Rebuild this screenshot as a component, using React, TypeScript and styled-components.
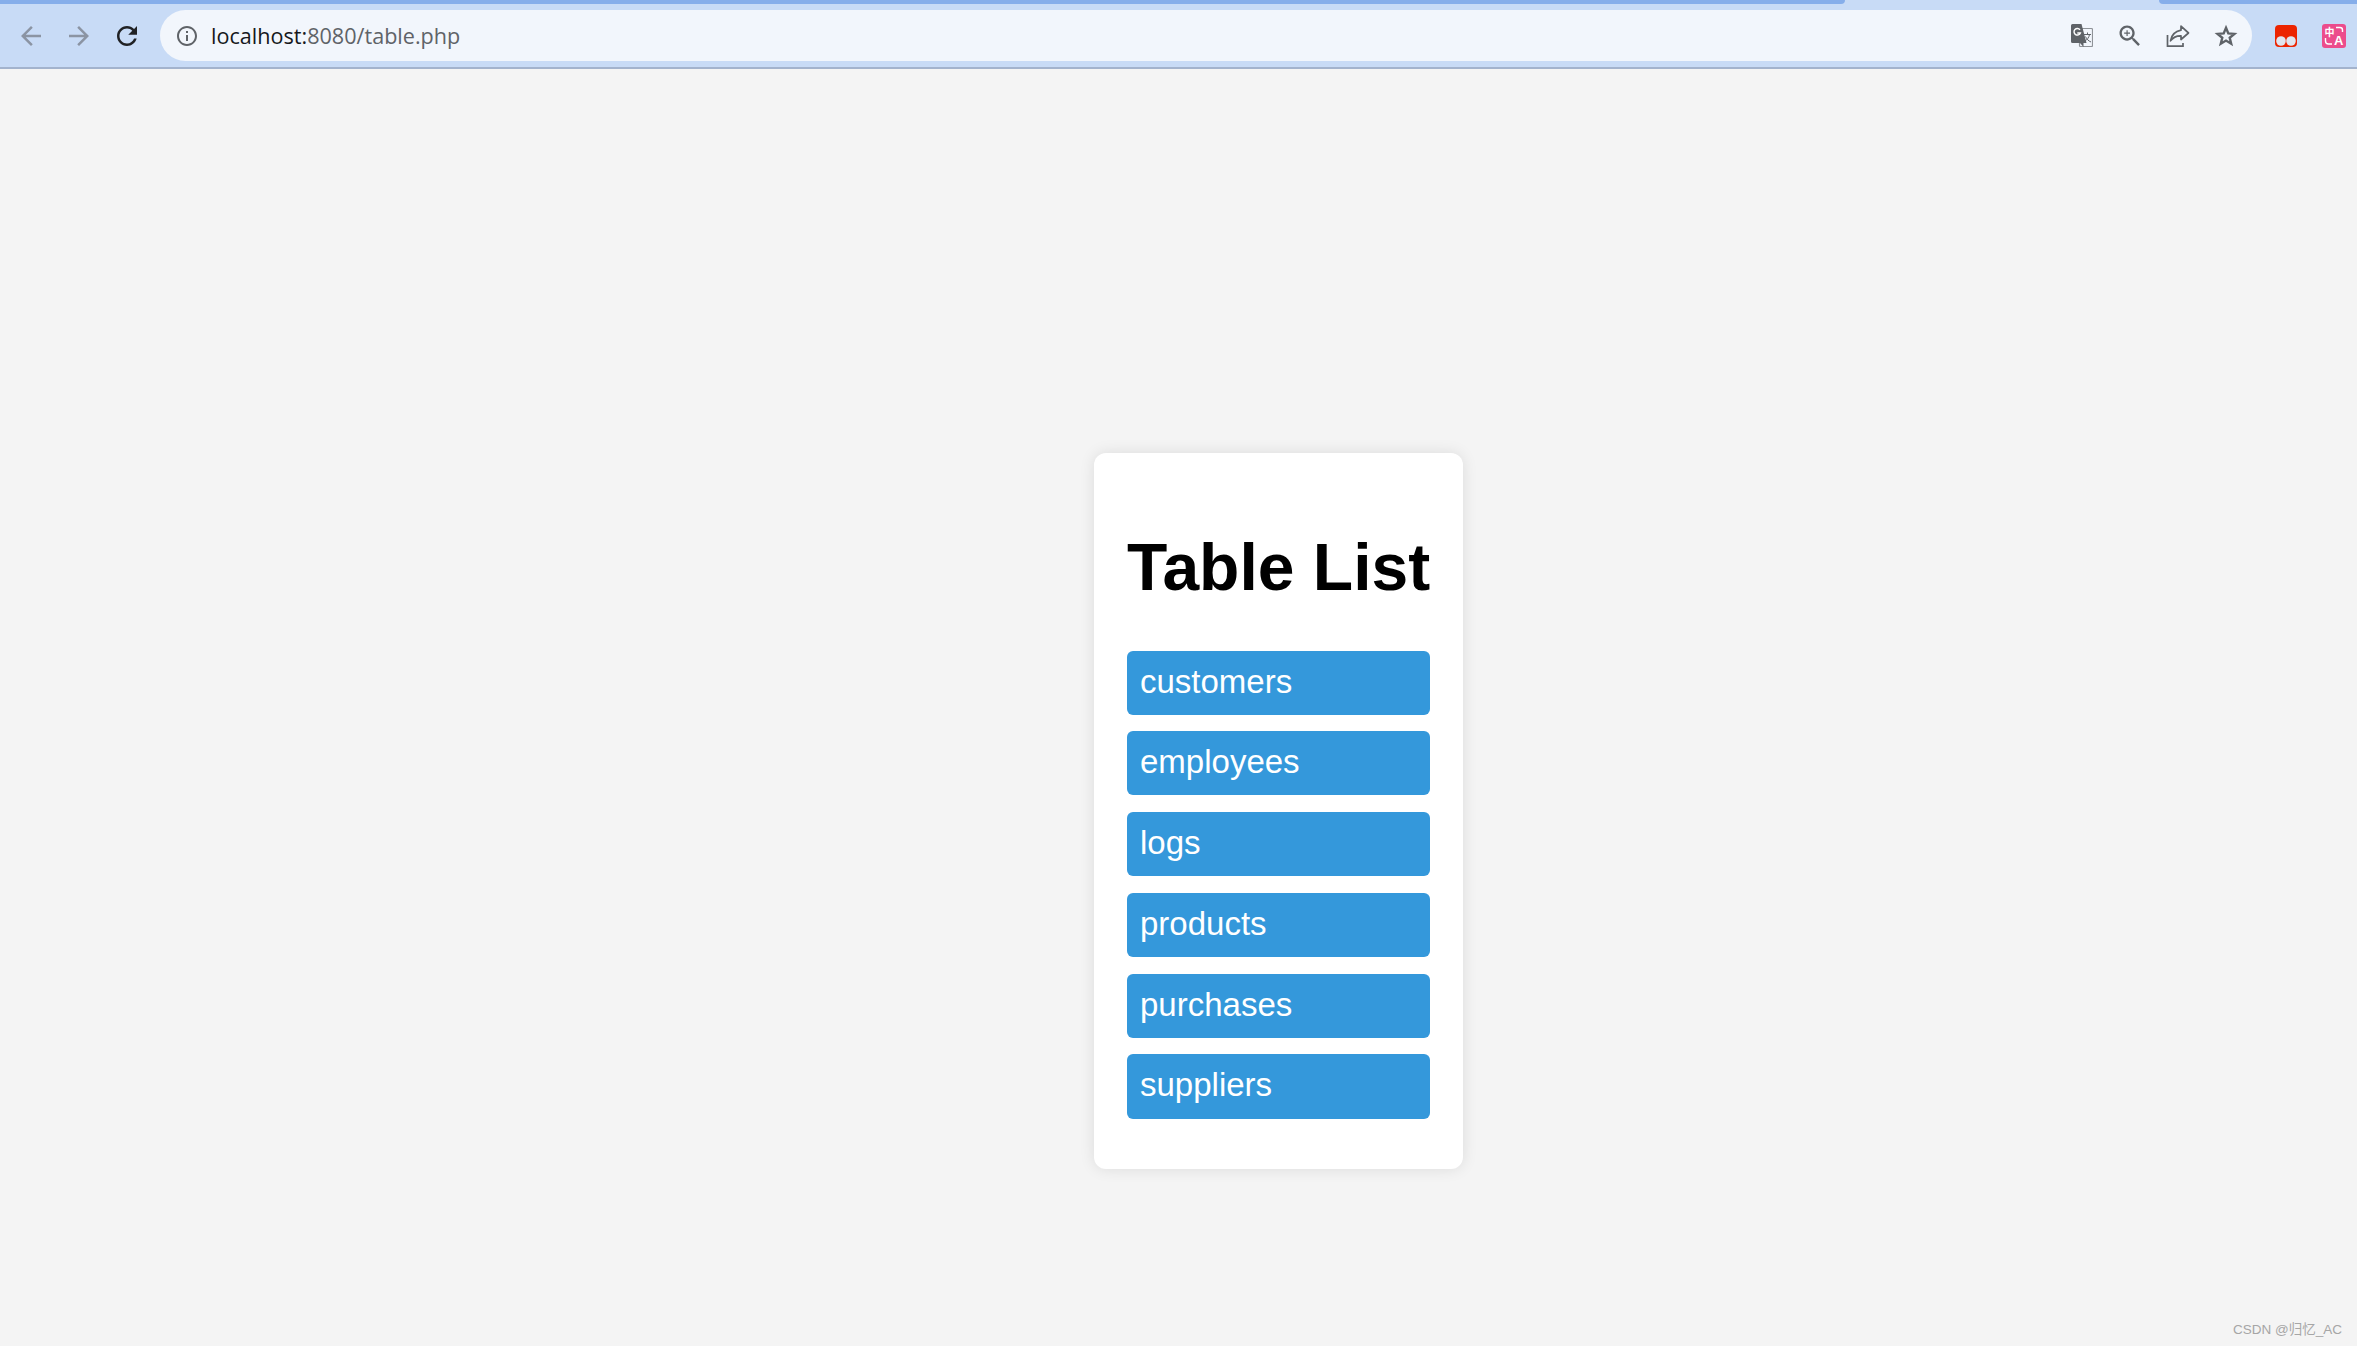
import React from "react";
import styled, { createGlobalStyle } from "styled-components";

const Global = createGlobalStyle`
  html, body { margin: 0; padding: 0; height: 100%; overflow: hidden; background: #f4f4f4; }
  body { font-family: "Liberation Sans", Arial, sans-serif; }
  #root { height: 100%; }
`;

const Page = styled.div`
  display: flex;
  flex-direction: column;
  height: 1346px;
  position: relative;
`;

const Chrome = styled.header`
  flex: none;
  height: 69px;
  box-sizing: border-box;
  background: #c8dbf6;
  border-bottom: 2px solid #a3b3cd;
  display: flex;
  flex-direction: column;
`;

const TabStrip = styled.div`
  display: flex;
  justify-content: space-between;
  height: 4px;
  flex: none;
`;

const TabEdge = styled.span<{ $w: number; $left?: boolean }>`
  display: block;
  width: ${(p) => p.$w}px;
  height: 4px;
  background: #86aeea;
  border-radius: ${(p) => (p.$left ? "0 0 0 5px" : "0 0 5px 0")};
`;

const Toolbar = styled.div`
  flex: 1;
  display: flex;
  align-items: center;
  padding: 0 0 0 15px;
`;

const NavButton = styled.span<{ $c: string }>`
  width: 32px;
  height: 32px;
  margin-right: 16px;
  flex: none;
  display: flex;
  align-items: center;
  justify-content: center;
  color: ${(p) => p.$c};
  &:nth-child(3) { margin-right: 17px; }
`;

const Omnibox = styled.div`
  flex: none;
  width: 2092px;
  height: 51px;
  border-radius: 26px;
  background: #f2f6fc;
  display: flex;
  align-items: center;
  padding: 0 10px 0 15px;
  box-sizing: border-box;
`;

const SiteIcon = styled.span`
  width: 24px;
  height: 24px;
  flex: none;
  color: #5f6368;
  display: flex;
  margin-right: 12px;
`;

const Url = styled.div`
  flex: 1;
  font-family: "Open Sans", "Noto Sans", sans-serif;
  font-size: 21.6px;
  color: #5f6368;
  white-space: nowrap;
  line-height: 51px;
`;

const Host = styled.span`
  color: #16181c;
`;

const BoxActions = styled.div`
  display: flex;
  gap: 16px;
  align-items: center;
`;

const BoxAction = styled.span`
  width: 32px;
  height: 32px;
  display: flex;
  align-items: center;
  justify-content: center;
  color: #5f6368;
`;

const Extensions = styled.div`
  display: flex;
  align-items: center;
  gap: 24px;
  margin-left: 22px;
`;

const Ext = styled.span`
  width: 24px;
  height: 24px;
  display: flex;
`;

const Main = styled.main`
  flex: 1;
  padding: 384px 0 0 1094px;
`;

const Card = styled.section`
  width: 369px;
  height: 716px;
  box-sizing: border-box;
  background: #fff;
  border-radius: 12px;
  box-shadow: 0 0 15px rgba(0, 0, 0, 0.1);
  padding: 0 33px;
`;

const Title = styled.h1`
  margin: 0;
  padding-top: 73px;
  font-size: 66px;
  line-height: 83px;
  font-weight: 700;
  color: #000;
  text-align: center;
  white-space: nowrap;
`;

const List = styled.ul`
  list-style: none;
  margin: 41.5px 0 0;
  padding: 0;
  display: flex;
  flex-direction: column;
  gap: 16.6px;
`;

const Item = styled.li`
  height: 64.2px;
  border-radius: 6px;
  background: #3498db;
  color: #fff;
  font-size: 33px;
  line-height: 62px;
  padding-left: 13px;
`;

const Watermark = styled.div`
  position: absolute;
  right: 15px;
  bottom: 7px;
  font-family: "Liberation Sans", "Noto Sans CJK SC", sans-serif;
  font-size: 13.5px;
  line-height: 18px;
  color: #a6a6a6;
`;

const Mat = ({ d, size = 32 }: { d: string; size?: number }) => (
  <svg width={size} height={size} viewBox="0 0 24 24" fill="currentColor" fillRule="evenodd">
    <path d={d} />
  </svg>
);

const tables = ["customers", "employees", "logs", "products", "purchases", "suppliers"];

export default function App() {
  return (
    <Page>
      <Global />
      <Chrome>
        <TabStrip>
          <TabEdge $w={1845} />
          <TabEdge $w={198} $left />
        </TabStrip>
        <Toolbar>
          <NavButton $c="#8b94a3">
            <Mat d="M20 11H7.83l5.59-5.59L12 4l-8 8 8 8 1.41-1.41L7.83 13H20v-2z" size={30} />
          </NavButton>
          <NavButton $c="#8b94a3">
            <Mat d="M12 4l-1.41 1.41L16.17 11H4v2h12.17l-5.58 5.59L12 20l8-8z" size={30} />
          </NavButton>
          <NavButton $c="#202124">
            <Mat d="M17.65 6.35C16.2 4.9 14.21 4 12 4c-4.42 0-7.99 3.58-7.99 8s3.57 8 7.99 8c3.73 0 6.84-2.55 7.73-6h-2.08c-.82 2.33-3.04 4-5.65 4-3.31 0-6-2.69-6-6s2.69-6 6-6c1.66 0 3.14.69 4.22 1.78L13 11h7V4l-2.35 2.35z" size={30} />
          </NavButton>
          <Omnibox>
            <SiteIcon>
              <Mat size={24} d="M11 7h2v2h-2zm0 4h2v6h-2zm1-9C6.48 2 2 6.48 2 12s4.48 10 10 10 10-4.48 10-10S17.52 2 12 2zm0 18c-4.41 0-8-3.59-8-8s3.59-8 8-8 8 3.59 8 8-3.59 8-8 8z" />
            </SiteIcon>
            <Url>
              <Host>localhost:</Host>8080/table.php
            </Url>
            <BoxActions>
              <BoxAction>
                <svg width="22" height="23" viewBox="0 0 22 23">
                  <rect x="8.500" y="4.500" width="13" height="18" rx="1" fill="#f2f6fc" stroke="#8f9398" strokeWidth="1.200" />
                  <path d="M1.500 0H10.500L15.500 19H12.500V23L9 19H1.500A1.500 1.500 0 0 1 0 17.500V1.500A1.500 1.500 0 0 1 1.500 0Z" fill="#5f6368" />
                  <path d="M9 5.800A3.300 3.300 0 1 0 9.400 9H6.300" fill="none" stroke="#fff" strokeWidth="1.400" />
                  <path d="M13 10.500H20M16.500 8.500V10.500M18.500 10.500C18 13.500 16 16 13.500 17.500M14.500 12.500C15.500 15 17.500 17 20 18" fill="none" stroke="#5f6368" strokeWidth="1" />
                </svg>
              </BoxAction>
              <BoxAction>
                <Mat size={28} d="M15.5 14h-.79l-.28-.27C15.41 12.59 16 11.11 16 9.500 16 5.910 13.090 3 9.500 3S3 5.910 3 9.500 5.910 16 9.500 16c1.610 0 3.090-.59 4.230-1.570l.27.28v.79l5 4.990L20.490 19l-4.990-5zm-6 0C7.010 14 5 11.990 5 9.500S7.010 5 9.500 5 14 7.010 14 9.500 11.990 14 9.500 14zM10 7H9v2H7v1h2v2h1v-2h2V9h-2V7z" />
              </BoxAction>
              <BoxAction>
                <svg width="24" height="24" viewBox="0 0 24 24" fill="none" stroke="currentColor" strokeWidth="1.700">
                  <path d="M1.500 11v11.200h15.500V19" />
                  <path d="M15 2.200 22.500 9 15 15.500v-3.700c-4.500-.2-7.800 1.300-10.500 5C5.400 11.500 9 7.400 15 6.200z" strokeLinejoin="round" />
                </svg>
              </BoxAction>
              <BoxAction>
                <svg width="24" height="24" viewBox="0 0 24 24" fill="none" stroke="currentColor" strokeWidth="2.400" strokeLinejoin="miter">
                  <path d="M12 3.800 14.300 9.400 20.400 9.900 15.700 13.800 17.200 19.800 12 16.600 6.800 19.800 8.300 13.800 3.600 9.900 9.700 9.400Z" />
                </svg>
              </BoxAction>
            </BoxActions>
          </Omnibox>
          <Extensions>
            <Ext>
              <svg width="24" height="24" viewBox="0 0 24 24">
                <rect x="1" y="1" width="22" height="22" rx="4" fill="#ec2400" />
                <circle cx="7" cy="17" r="4.800" fill="#dfe5ef" />
                <circle cx="17" cy="17" r="4.800" fill="#dfe5ef" />
              </svg>
            </Ext>
            <Ext>
              <svg width="24" height="24" viewBox="0 0 24 24">
                <rect width="24" height="24" rx="3" fill="#ec4c8c" />
                <text x="2.500" y="11.500" fontSize="10" fontWeight="700" fill="#fff" fontFamily="'Noto Sans CJK SC', sans-serif">中</text>
                <text x="12" y="21" fontSize="13" fontWeight="700" fill="#fff" fontFamily="'Liberation Sans', sans-serif">A</text>
                <path d="M14 3.500h4a2.500 2.500 0 0 1 2.500 2.500v2M3.500 14v3a3 3 0 0 0 3 3h3.500" fill="none" stroke="#fff" strokeWidth="1.400" />
              </svg>
            </Ext>
          </Extensions>
        </Toolbar>
      </Chrome>
      <Main>
        <Card>
          <Title>Table List</Title>
          <List>
            {tables.map((t) => (
              <Item key={t}>{t}</Item>
            ))}
          </List>
        </Card>
      </Main>
      <Watermark>CSDN @归忆_AC</Watermark>
    </Page>
  );
}
